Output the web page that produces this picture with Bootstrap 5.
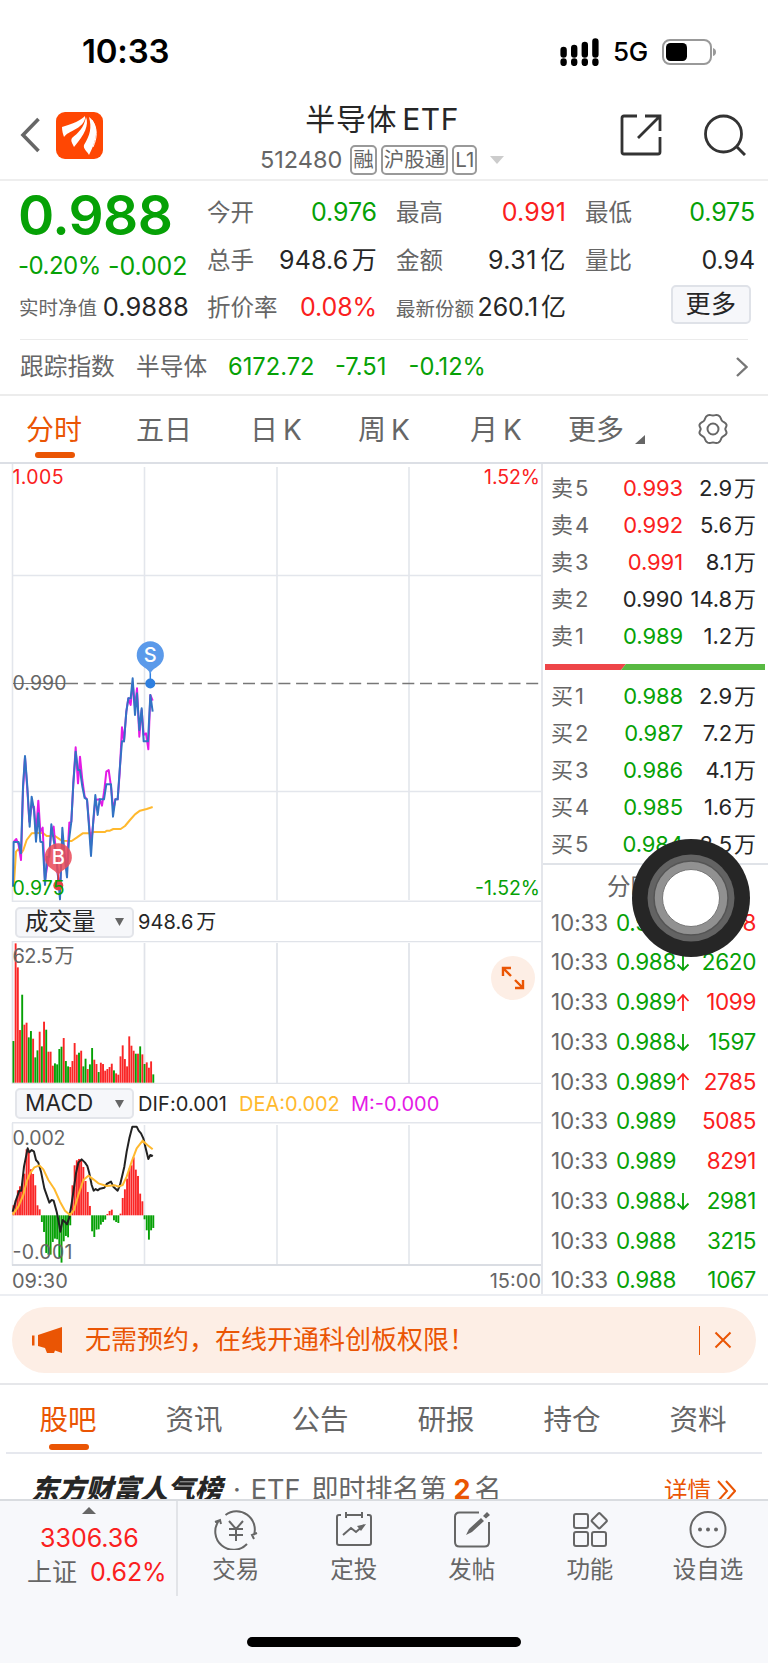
<!DOCTYPE html>
<html lang="zh-CN">
<head>
<meta charset="utf-8">
<meta name="viewport" content="width=device-width, initial-scale=1">
<title>半导体ETF 512480</title>
<link href="https://cdn.jsdelivr.net/npm/bootstrap@5.3.0/dist/css/bootstrap.min.css" rel="stylesheet">
<style>
:root{--up:#fa2020;--down:#06a106;--ink:#262626;--gray:#666;--brand:#ea5504;--rule:#e3e5ea}
body{width:768px;height:1663px;overflow:hidden;background:#fff;color:var(--ink);font-family:Inter,"Noto Sans CJK SC",sans-serif;font-size:24px;line-height:1;font-weight:400;white-space:nowrap}
svg{display:block;flex:none}
svg text{font-family:Inter,"Noto Sans CJK SC",sans-serif}
.up{color:var(--up)}.down{color:var(--down)}.gray{color:var(--gray)}.brand{color:var(--brand)}
.status{height:90px;padding:13px 51px 0 82px}
.clock{font-size:33px;font-weight:600;letter-spacing:-.2px;color:#000}
.net{font-size:26px;font-weight:500;letter-spacing:-.2px;color:#000;margin:1px 14px 0 13px}
.head{height:91px;padding:1px 22px 0 20px;border-bottom:2px solid #eee}
.fund-name{font-size:30px;line-height:34px;word-spacing:-4px;letter-spacing:.6px}
.code-row{font-size:23.5px;height:30px}
.tag{height:30px;border:2px solid #999;border-radius:5px;font-size:20.5px;line-height:25px;padding:0 1px;margin-left:4px;color:var(--gray);text-align:center}
.quote{height:158px;padding:8px 13px 0 19px}
.price{font-size:55px;font-weight:600;letter-spacing:-.6px;line-height:52px;width:189px;margin-left:-1px}
.q-left{width:188px}
.q-cell{height:47.5px}
.q-cell .v{font-size:25px;letter-spacing:-.1px;word-spacing:-4px}
.q-cell .k{font-size:23.5px;color:var(--gray)}
.q-cell .k.sm{font-size:19.5px}
.q-col{width:170px;margin-right:19px}
.more-btn{width:80px;height:39px;border:2px solid #dfe2e8;border-radius:5px;background:#f6f7fa;color:var(--ink);font-size:25px;line-height:1;padding:0;margin-right:4px;letter-spacing:.5px}
.track{height:57px;border-bottom:2px solid #ececec;position:relative}
.track-in{margin:0 20px;border-top:1.5px solid #ebebeb;height:55px;font-size:23.7px}
.periods{height:68px;border-bottom:2px solid #dcdfe5;font-size:28px;color:var(--gray);padding-top:2px;word-spacing:-3px}
.periods>span,.periods>svg{display:block;flex:none}
.tab-on{color:var(--brand);position:relative}
.tab-on::after{content:"";position:absolute;left:50%;margin-left:-20px;width:40px;height:6px;border-radius:3px;background:var(--brand);bottom:-14px}
.market{height:832px;border-bottom:2px solid #eceef2}
.charts{width:541px}
.side{width:227px;border-left:2px solid #e4e6eb}
.ind{height:39px;padding:1px 0 0 15px;font-size:20px}
.ind-btn{width:119px;height:31px;border:2px solid #e3e5ea;border-radius:5px;background:#f6f7fa;padding:0 8px;margin-right:4px;font-size:23.5px}
.axis{height:29px;padding-left:12px;font-size:20px;color:var(--gray)}
.lv{height:37.1px;padding:0 12px 0 8px;font-size:22px;letter-spacing:-.1px;word-spacing:-4px}
.lv .n{width:54px;color:var(--gray)}
.lv .p{width:78px;text-align:right}
.lv .q{width:73px;text-align:right}
.ratio{height:6px;margin:10px 3px 7px 2px}
.td{height:39.75px;padding:0 11px 0 8px;font-size:22.5px;letter-spacing:-.35px}
.td .t{width:65px;color:var(--gray);letter-spacing:-.1px}
.td .p{width:60px}
.td .a{width:15px}
.td .q{width:65px;text-align:right}
.knob{position:absolute;left:632px;top:839px}
.full{position:absolute;left:491px;top:956px}
.notice{height:89px;padding:11px 12px 12px;border-bottom:2px solid #e6e7ea}
.notice-pill{height:66px;border-radius:33px;background:#fdeee5;padding:0 24px 0 19px;font-size:26px;color:var(--brand)}
.tabs2{height:69px;margin:0 6px;border-bottom:2px solid #e6e8ee;font-size:28.5px;color:var(--gray)}
.tabs2 .nav-link{padding:0;color:inherit;line-height:34px;margin-top:2px}
.tabs2 .nav-item{margin-left:-1px;margin-right:1px}
.tabs2 .tab-on{color:var(--brand)}
.tabs2 .tab-on::after{bottom:-13px;margin-left:-19px}
.rank{height:45px;overflow:hidden;padding:22px 32px 0 31px;font-size:27px;color:var(--gray)}
.rank-name{font-weight:900;font-style:italic;color:var(--ink);font-size:27.3px}
.dock{height:165px;background:#f7f8fb;border-top:2px solid #d9dce0;position:relative}
.dock-idx{width:178px;height:95px;border-right:2px solid #e2e4e8;font-size:25px}
.dock-item{width:118.3px;font-size:23.5px;color:var(--gray);padding:9px 2px 0 0}
.home-bar{position:absolute;left:247px;bottom:17px;width:274px;height:10px;border-radius:5px;background:#000}
</style>
</head>
<body>
<div class="status d-flex align-items-center">
  <span class="clock me-auto">10:33</span>
  <svg width="40" height="28" viewBox="0 0 40 28"><g stroke="#000" stroke-width="6.4" stroke-linecap="round"><path d="M3.6 12v4.500M14.200 10v6.500M24.800 7v9.500M35.400 3.500v13"/><path d="M3.600 23.500v1.400M14.200 23.500v1.400M24.800 23.500v1.400M35.400 23.500v1.400"/></g></svg>
  <span class="net">5G</span>
  <svg width="55" height="28" viewBox="0 0 55 28"><rect x="1" y="2" width="48" height="24" rx="7" fill="none" stroke="#999" stroke-width="2"/><rect x="4" y="5" width="21" height="18" rx="4.500"/><path d="M51 10q3 1 3 4t-3 4z" fill="#999"/></svg>
</div>

<header class="head d-flex align-items-center">
  <svg width="20" height="36" viewBox="0 0 20 36"><path d="M18.500 2 3 18l15.500 16" fill="none" stroke="#666" stroke-width="3.600"/></svg>
  <svg class="ms-3" width="47" height="47" viewBox="0 0 47 47"><rect width="47" height="47" rx="9" fill="#ff4703"/><path d="M6 15C17 12 25 8 29 4c1 6-5 11-11 14-5 3-7 3-10 7-1-3-2-6-2-10zM30 5c3 8-1 17-12 30-1-3-4-6-2-9 6-5 12-10 14-21zM33 5c9 7 10 19 0 38-2-4-6-6-5-10 6-10 8-17 5-28z" fill="#fff"/><path d="M36 8c6 9 5 18 1 27" stroke="#fff" fill="none"/></svg>
  <div class="d-flex flex-column align-items-center" style="margin:6px 0 0 157px">
    <div class="fund-name">半导体 ETF</div>
    <div class="code-row d-flex align-items-center gray" style="margin-top:9px">512480<span class="tag" style="margin-left:8px">融</span><span class="tag">沪股通</span><span class="tag">L1</span><svg style="margin-left:13px" width="14" height="8"><path d="M0 0h14l-7 8z" fill="#ccc"/></svg></div>
  </div>
  <svg class="ms-auto" width="42" height="42" viewBox="0 0 42 42"><path d="M17 2H4Q2 2 2 4v34q0 2 2 2h34q2 0 2-2V23M25 2h15v15M39 3 18 24" fill="none" stroke="#333" stroke-width="2.800"/></svg>
  <svg style="margin-left:42px" width="42" height="42" viewBox="0 0 42 42"><circle cx="19.500" cy="20" r="18" fill="none" stroke="#333" stroke-width="2.800"/><path d="m32 32 9 9" stroke="#333" stroke-width="3"/></svg>
</header>

<section class="quote d-flex">
  <div class="q-left">
    <div class="price down">0.988</div>
    <div class="d-flex align-items-center down" style="height:48px;margin-top:1px"><span style="width:90px;font-size:24px;letter-spacing:-.5px;margin-left:-1px">-0.20%</span><span style="font-size:25px;letter-spacing:-.1px">-0.002</span></div>
    <div class="q-cell d-flex align-items-center" style="width:170px;margin-top:-7px"><span class="k sm" style="padding-top:3px">实时净值</span><span class="v ms-auto" style="font-size:25.500px;letter-spacing:.1px">0.9888</span></div>
  </div>
  <div class="q-col">
    <div class="q-cell d-flex align-items-center justify-content-between"><span class="k">今开</span><span class="v down">0.976</span></div>
    <div class="q-cell d-flex align-items-center justify-content-between"><span class="k">总手</span><span class="v" style="letter-spacing:.2px">948.6 万</span></div>
    <div class="q-cell d-flex align-items-center justify-content-between"><span class="k">折价率</span><span class="v up">0.08%</span></div>
  </div>
  <div class="q-col">
    <div class="q-cell d-flex align-items-center justify-content-between"><span class="k">最高</span><span class="v up" style="letter-spacing:.2px">0.991</span></div>
    <div class="q-cell d-flex align-items-center justify-content-between"><span class="k">金额</span><span class="v" style="letter-spacing:.5px">9.31 亿</span></div>
    <div class="q-cell d-flex align-items-center justify-content-between"><span class="k sm" style="padding-top:3px">最新份额</span><span class="v">260.1 亿</span></div>
  </div>
  <div class="q-col me-0">
    <div class="q-cell d-flex align-items-center justify-content-between"><span class="k">最低</span><span class="v down">0.975</span></div>
    <div class="q-cell d-flex align-items-center justify-content-between"><span class="k">量比</span><span class="v">0.94</span></div>
    <div class="q-cell d-flex align-items-center justify-content-end" style="margin-top:-3px"><button class="btn more-btn">更多</button></div>
  </div>
</section>

<section class="track">
  <div class="track-in d-flex align-items-center">
    <span class="gray" style="width:116px">跟踪指数</span><span class="gray" style="width:92px">半导体</span>
    <span class="down" style="width:107px;letter-spacing:0">6172.72</span><span class="down" style="width:73.500px">-7.51</span><span class="down">-0.12%</span>
    <svg class="ms-auto" width="12" height="22" viewBox="0 0 12 22"><path d="m1 2 9.500 9L1 20" fill="none" stroke="#777" stroke-width="2.400"/></svg>
  </div>
</section>

<nav class="periods d-flex align-items-center">
  <span class="tab-on" style="margin-left:26px;width:57px">分时</span>
  <span style="margin-left:53px;width:56px">五日</span>
  <span style="margin-left:58px;width:56px">日 K</span>
  <span style="margin-left:52px;width:56px">周 K</span>
  <span style="margin-left:56px;width:56px">月 K</span>
  <span style="margin-left:42px;width:57px">更多</span>
  <svg style="margin-left:10px;margin-top:20px" width="10" height="10"><path d="M10 0v9H0z" fill="#666"/></svg>
  <svg style="margin-left:52px;margin-top:-2px" width="32" height="32" viewBox="0 0 32 32"><path d="M16 2.500c2.800 0 2.900-1.300 5.300-.2 3 1.500 2.100 3.200 3.500 5.200 1.300 1.900 4 1.700 4.700 4.300.5 2-1.200 2.500-1.200 4.200s1.700 2.200 1.200 4.200c-.7 2.600-3.400 2.400-4.700 4.300-1.400 2-.5 3.700-3.500 5.200-2.400 1.100-2.500-.2-5.300-.2s-2.900 1.300-5.300.2c-3-1.500-2.100-3.200-3.500-5.200-1.300-1.900-4-1.700-4.700-4.300-.5-2 1.200-2.500 1.200-4.200s-1.700-2.200-1.200-4.200c.7-2.600 3.400-2.400 4.700-4.300 1.400-2 .5-3.700 3.500-5.200 2.400-1.100 2.500.2 5.300.2z" fill="none" stroke="#666" stroke-width="2"/><circle cx="16" cy="16" r="5.500" fill="none" stroke="#666" stroke-width="2"/></svg>
</nav>

<main class="market d-flex">
  <div class="charts">
    <svg width="541" height="438" viewBox="0 464 541 438" font-size="19.500">
      <g stroke="#e3e6ec" stroke-width="1.600" fill="none"><path d="M12.500 464v437.200H542M144.500 467v433M277 467v433M409 467v433M12 575.500h530M12 791.500h530"/></g>
      <path d="M66 683.500H541" stroke="#777" stroke-width="1.600" stroke-dasharray="12 5.700"/>
      <path d="M13 683.500h53" stroke="#777" stroke-width="1.200"/>
      <g transform="translate(0 640) scale(.33333)" fill="none" stroke-width="6" stroke-linejoin="round">
        <path stroke="#ffb92e" d="M42 730 48 635 55 628 65 638 70 630 80 600 95 580 128 578 140 588 165 588 185 602 215 603 230 593 248 580 270 580 280 576 315 576 320 572 330 572 340 567 362 567 375 558 390 540 405 523 420 512 440 507 458 501"/>
        <path stroke="#e41ae6" d="M41 606 49 597 56 615 63 660 69 450 75 352 82 450 88 545 95 500 102 500 108 580 115 482 121 575 128 563 135 720 148 640 154 575 161 560 175 720 180 750 187 590 200 690 208 548 214 545 220 430 227 322 234 430 240 350 247 420 254 470 261 478 273 620 286 480 299 478 306 497 313 450 319 395 326 390 333 440 340 510 346 478 353 478 359 400 366 262 372 304 379 215 385 175 392 195 398 130 405 200 411 145 418 290 425 210 431 285 438 280 445 328 451 165 458 182"/>
        <path stroke="#3273c4" d="M39 740 41 606 56 606 63 640 69 440 75 348 82 440 89 560 95 470 102 510 108 605 115 520 121 605 128 607 135 735 141 650 148 650 154 553 161 600 168 640 175 720 180 778 187 563 194 650 201 712 207 600 214 545 220 430 227 335 234 390 240 390 247 440 254 474 261 478 267 560 273 648 280 540 286 465 293 525 299 478 312 478 319 433 333 433 339 530 346 478 353 478 359 390 366 304 372 304 379 215 385 175 392 175 398 115 405 225 411 160 418 270 425 205 431 304 444 304 451 165 458 215"/>
      </g>
      <path d="M150.300 672v11" stroke="#2e7fe0" stroke-width="1.500"/><circle cx="150.300" cy="683.500" r="5" fill="#2e7fe0"/>
      <path d="M150.300 674c-2-5-5-5.500-8.500-8.500a13.600 13.600 0 1 1 17 0c-3.500 3-6.500 3.500-8.500 8.500z" fill="#5b9aea"/>
      <text x="150.300" y="662" font-size="20" font-weight="500" fill="#fff" text-anchor="middle">S</text>
      <path d="M58.300 874v11" stroke="#e33" stroke-width="1.500"/><circle cx="58.300" cy="885.500" r="5" fill="#e8404a"/>
      <path d="M58.300 876c-2-5-5-5.500-8.500-8.500a13.600 13.600 0 1 1 17 0c-3.500 3-6.500 3.500-8.500 8.500z" fill="#ea4b58" opacity=".86"/>
      <text x="58.300" y="864" font-size="20" font-weight="500" fill="#fff" text-anchor="middle">B</text>
      <text x="12.500" y="484" fill="#fa2020" textLength="51">1.005</text><text x="484" y="484" fill="#fa2020" textLength="56">1.52%</text>
      <text x="12.500" y="690" fill="#666" textLength="54">0.990</text>
      <text x="12.500" y="895" fill="#06a106" textLength="52">0.975</text><text x="475" y="895" fill="#06a106" textLength="65">-1.52%</text>
    </svg>
    <div class="ind d-flex align-items-center"><div class="ind-btn d-flex align-items-center justify-content-between"><span>成交量</span><svg width="9" height="8"><path d="M0 0h9L4.500 8z" fill="#666"/></svg></div><span style="letter-spacing:.1px;word-spacing:-3px">948.6 万</span></div>
    <svg width="541" height="143" viewBox="0 941 541 143">
      <path d="M12 941.500h530M12.500 941v142.500H542M144.500 943v140M277 943v140M409 943v140" fill="none" stroke="#e0e3e9" stroke-width="1.700"/>
      <g id="vol"></g>
      <text x="12.500" y="963" font-size="20" fill="#666" textLength="62" word-spacing="-3">62.5 万</text>
    </svg>
    <div class="ind d-flex align-items-center" style="height:38px"><div class="ind-btn d-flex align-items-center justify-content-between"><span style="font-size:22.500px;letter-spacing:.2px">MACD</span><svg width="9" height="8"><path d="M0 0h9L4.500 8z" fill="#666"/></svg></div><span style="width:101px;letter-spacing:.1px">DIF:0.001</span><span style="width:112px;color:#ffb92e">DEA:0.002</span><span style="color:#e41ae6">M:-0.000</span></div>
    <svg width="541" height="144" viewBox="0 1122 541 144" font-size="19.500">
      <path d="M12 1122.800h530M12.500 1123v142.500M144.500 1125v139M277 1125v139M409 1125v139" fill="none" stroke="#e3e6ec" stroke-width="1.600"/><path d="M12 1265h530" stroke="#dadde3" stroke-width="2"/>
      <g id="macd"></g>
      <g transform="translate(0 1080) scale(.33333)" fill="none" stroke-width="6" stroke-linejoin="round">
        <path stroke="#222" d="M38 395 48 360 58 332 64 332 72 260 83 205 88 217 95 210 102 215 108 240 115 248 123 275 133 325 148 368 155 360 161 362 170 395 175 420 181 455 188 420 194 425 201 433 208 412 215 370 221 330 228 280 235 248 245 238 255 248 262 258 268 280 275 315 281 332 287 327 293 331 300 326 313 323 320 312 333 305 340 320 353 332 360 315 366 290 373 260 380 215 388 175 397 140 410 140 416 152 423 160 430 175 436 200 445 237 451 225 455 228 458 225"/>
        <path stroke="#ffb92e" d="M38 404 55 380 70 345 80 305 90 280 103 262 118 256 130 268 145 300 163 327 180 365 195 392 210 405 222 390 235 345 250 300 265 287 280 298 295 310 320 318 345 316 355 320 368 315 380 290 395 245 410 205 428 182 442 195 458 208"/>
      </g>
      <text x="12.500" y="1144.500" fill="#666" textLength="53">0.002</text><text x="12.500" y="1258.500" fill="#666" textLength="60">-0.001</text>
    </svg>
    <div class="axis d-flex align-items-center justify-content-between"><span>09:30</span><span>15:00</span></div>
  </div>
  <aside class="side" id="side">
    <div style="height:5px"></div>
    <div id="sell"></div>
    <div class="ratio"><svg width="220" height="6"><path d="M0 0h81l-5 6H0z" fill="#ee4548"/><path d="M81 0h139v6H76z" fill="#58b942"/></svg></div>
    <div id="buy"></div>
    <div class="gray d-flex align-items-center justify-content-center" style="height:41px;border-top:2px solid #e0e3e8;font-size:23.500px;padding:4px 3px 0 0">分时成交</div>
    <div id="deals" style="margin-top:-1px"></div>
  </aside>
</main>

<section class="notice">
  <div class="notice-pill d-flex align-items-center">
    <svg width="32" height="28" viewBox="0 0 32 28"><path d="M1 9.500h2.500v10H1zM7 9 31 1v26l-7-2.500-1 2.500h-7l-2-5-7-2z" fill="#ea5504"/></svg>
    <span style="margin-left:22px">无需预约，在线开通科创板权限！</span>
    <span class="ms-auto" style="width:1.500px;height:29px;background:#ea5504"></span>
    <svg style="margin-left:14px" width="18" height="18" viewBox="0 0 18 18"><path d="m1.500 1.500 15 15m0-15-15 15" stroke="#ea5504" stroke-width="2"/></svg>
  </div>
</section>

<nav class="tabs2 nav nav-fill flex-nowrap align-items-center">
  <div class="nav-item"><span class="nav-link tab-on">股吧</span></div>
  <div class="nav-item"><span class="nav-link">资讯</span></div>
  <div class="nav-item"><span class="nav-link">公告</span></div>
  <div class="nav-item"><span class="nav-link">研报</span></div>
  <div class="nav-item"><span class="nav-link">持仓</span></div>
  <div class="nav-item"><span class="nav-link">资料</span></div>
</nav>

<section class="rank d-flex">
  <span class="rank-name">东方财富人气榜</span><span style="margin-left:11px">·</span>
  <span style="margin-left:10px">ETF</span><span style="margin-left:11px">即时排名第</span><b class="brand" style="margin:0 4px 0 7px">2</b>名
  <span class="brand ms-auto" style="font-size:23.500px;margin-top:3px">详情</span>
  <svg style="margin:4px 0 0 6px" width="19" height="22" viewBox="0 0 19 22"><path d="m1 1 9 10-9 10M9 1l9 10-9 10" fill="none" stroke="#ea5504" stroke-width="2"/></svg>
</section>

<footer class="dock d-flex">
  <div class="dock-idx">
    <svg style="margin:6px 0 0 82px" width="14" height="7"><path d="M0 7 7 0l7 7z" fill="#666"/></svg>
    <div class="up" style="margin:12px 0 0 40px;letter-spacing:0">3306.36</div>
    <div class="d-flex align-items-center" style="margin:9px 0 0 27px"><span class="gray" style="width:63px">上证</span><span class="up" style="letter-spacing:-.1px">0.62%</span></div>
  </div>
  <div class="dock-item d-flex flex-column align-items-center"><svg width="44" height="40" viewBox="0 0 44 40" fill="none" stroke="#666" stroke-width="2"><path d="M11.500 5A18.300 18.300 0 0 1 40 25m0 4-2-4 5-2M33 34A18.300 18.300 0 0 1 5 10.500M1 12l5-2 1 4M15 11l7 8 7-8M22 19v12M15 19h14M15 25h14"/></svg><span style="margin-top:8px">交易</span></div>
  <div class="dock-item d-flex flex-column align-items-center"><svg width="40" height="40" viewBox="0 0 40 40" fill="none" stroke="#666" stroke-width="2"><path d="M7 5H5Q3 5 3 7v26q0 2 2 2h30q2 0 2-2V7q0-2-2-2h-2M12 5h16M12 2v6M28 2v6M9 25l8-7 5 4 8-7"/><path d="M23 16l9-2-5 7z" fill="#666" stroke="none"/></svg><span style="margin-top:8px">定投</span></div>
  <div class="dock-item d-flex flex-column align-items-center"><svg width="40" height="40" viewBox="0 0 40 40" fill="none" stroke="#666" stroke-width="2"><path d="M27 2.500H7.500Q3 2.500 3 7v25q0 4.500 4.500 4.500h25Q37 36.500 37 32V12"/><path d="m14 25 3-6L29 8l3 3-12 11zM31 6l4-4 3 3-4 3.500z" fill="#666" stroke="none"/></svg><span style="margin-top:8px">发帖</span></div>
  <div class="dock-item d-flex flex-column align-items-center"><svg width="40" height="40" viewBox="0 0 40 40" fill="none" stroke="#666" stroke-width="2"><rect x="4" y="4" width="14" height="14" rx="2"/><rect x="4" y="22" width="14" height="14" rx="2"/><rect x="22" y="22" width="14" height="14" rx="2"/><rect x="23.500" y="5" width="11.500" height="11.500" rx="1.500" transform="rotate(45 29.250 10.750)"/></svg><span style="margin-top:8px">功能</span></div>
  <div class="dock-item d-flex flex-column align-items-center"><svg width="40" height="40" viewBox="0 0 40 40"><circle cx="20" cy="19.500" r="17.500" fill="none" stroke="#666" stroke-width="2"/><g fill="#666"><circle cx="12" cy="19.500" r="2"/><circle cx="20" cy="19.500" r="2"/><circle cx="28" cy="19.500" r="2"/></g></svg><span style="margin-top:8px">设自选</span></div>
  <div class="home-bar"></div>
</footer>

<svg class="full" width="44" height="44" viewBox="0 0 44 44"><circle cx="22" cy="22" r="22" fill="#fdeee5"/><path d="M12 20v-8h8M12 12l8 8M32 24v8h-8M32 32l-8-8" fill="none" stroke="#ea5504" stroke-width="2.400"/></svg>
<svg class="knob" width="118" height="118" viewBox="0 0 118 118"><circle cx="59" cy="59" r="59" fill="#262626"/><circle cx="59" cy="59" r="43.500" fill="#636363"/><circle cx="59" cy="59" r="37" fill="#919191" stroke="#555" stroke-width="1.500"/><circle cx="59" cy="59" r="28.500" fill="#fff" stroke="#777" stroke-width="1"/></svg>

<script src="https://cdn.jsdelivr.net/npm/bootstrap@5.3.0/dist/js/bootstrap.bundle.min.js"></script>
<script>
const STEP = 2.185, X0 = 12.5;
// one bar per minute: positive = rising, negative = falling; drawn in thirds of a pixel
const vol = [-125,418,346,158,-264,174,180,-136,-155,132,-76,-97,153,-109,183,-159,93,93,51,-58,-55,-101,-108,134,-65,-49,47,65,119,84,-90,96,-49,-72,41,-55,-104,69,56,-32,60,56,36,41,47,57,-37,28,24,79,112,71,49,139,111,96,-87,87,-109,85,-56,61,45,64,-25];
const macd = [30,45,75,87,95,125,198,190,138,124,90,30,18,-20,-50,-113,-118,-118,-80,-70,-72,-128,-142,-78,-62,-66,-30,90,150,165,169,168,145,103,70,28,-48,-65,-43,-42,-28,-20,-13,4,13,17,-15,-20,-23,5,52,78,110,140,150,174,137,118,65,42,-12,-45,-73,-45,-38];
const bar = (i, y, h, c) => `<rect x="${X0 + i * STEP}" y="${y}" width="1.900" height="${h}" fill="${c}"/>`;
document.getElementById('vol').innerHTML = vol.map((v, i) => bar(i, 1082.7 - Math.abs(v) / 3, Math.abs(v) / 3, v > 0 ? '#fa2626' : '#06a106')).join('');
document.getElementById('macd').innerHTML = macd.map((v, i) => bar(i, v > 0 ? 1215.3 - v / 3 : 1215.3, Math.abs(v) / 3, v > 0 ? '#fa2626' : '#06a106')).join('');

const level = ([n, p, q, c]) => `<div class="lv d-flex align-items-center"><span class="n">${n}</span><span class="p ${c}">${p}</span><span class="q">${q} 万</span></div>`;
document.getElementById('sell').innerHTML = [['卖 5','0.993','2.9','up'],['卖 4','0.992','5.6','up'],['卖 3','0.991','8.1','up'],['卖 2','0.990','14.8',''],['卖 1','0.989','1.2','down']].map(level).join('');
document.getElementById('buy').innerHTML = [['买 1','0.988','2.9','down'],['买 2','0.987','7.2','down'],['买 3','0.986','4.1','down'],['买 4','0.985','1.6','down'],['买 5','0.984','2.5','down']].map(level).join('');

const arrow = { u: '<path d="M7 18V2M1.500 8 7 2l5.500 6" fill="none" stroke="#fa2020" stroke-width="1.800"/>', d: '<path d="M7 1v16M1.500 11.500 7 17l5.500-5.500" fill="none" stroke="#06a106" stroke-width="1.800"/>', '': '' };
document.getElementById('deals').innerHTML = [['0.988','','3298','up'],['0.988','d','2620','down'],['0.989','u','1099','up'],['0.988','d','1597','down'],['0.989','u','2785','up'],['0.989','','5085','up'],['0.989','','8291','up'],['0.988','d','2981','down'],['0.988','','3215','down'],['0.988','','1067','down']]
  .map(([p, a, q, c]) => `<div class="td d-flex align-items-center"><span class="t">10:33</span><span class="p down">${p}</span><span class="a"><svg width="14" height="19">${arrow[a]}</svg></span><span class="q ${c}">${q}</span></div>`).join('');
</script>
</body>
</html>
